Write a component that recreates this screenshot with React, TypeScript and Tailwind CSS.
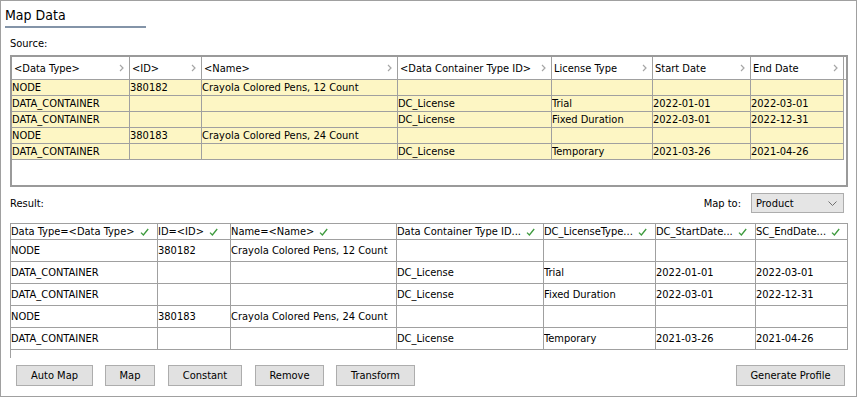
const srcCols = ['w-[118px]', 'w-[72px]', 'w-[196px]', 'w-[154px]', 'w-[101px]', 'w-[98px]', 'w-[93px]'];
const resCols = ['w-[147px]', 'w-[73px]', 'w-[166px]', 'w-[147px]', 'w-[112px]', 'w-[100px]', 'w-[92px]'];

const srcHeaders = ['<Data Type>', '<ID>', '<Name>', '<Data Container Type ID>', 'License Type', 'Start Date', 'End Date'];
const resHeaders = [
  'Data Type=<Data Type>',
  'ID=<ID>',
  'Name=<Name>',
  'Data Container Type ID...',
  'DC_LicenseType...',
  'DC_StartDate...',
  'SC_EndDate...',
];

const rows = [
  ['NODE', '380182', 'Crayola Colored Pens, 12 Count', '', '', '', ''],
  ['DATA_CONTAINER', '', '', 'DC_License', 'Trial', '2022-01-01', '2022-03-01'],
  ['DATA_CONTAINER', '', '', 'DC_License', 'Fixed Duration', '2022-03-01', '2022-12-31'],
  ['NODE', '380183', 'Crayola Colored Pens, 24 Count', '', '', '', ''],
  ['DATA_CONTAINER', '', '', 'DC_License', 'Temporary', '2021-03-26', '2021-04-26'],
];

function Chevron() {
  return (
    <svg width="5" height="8" viewBox="0 0 5 8" className="shrink-0">
      <path d="M1 1 L4 4 L1 7" fill="none" stroke="#a6a6a6" strokeWidth="1.2" />
    </svg>
  );
}

function Check() {
  return (
    <svg width="9" height="8" viewBox="0 0 9 8" className="shrink-0">
      <path d="M1 4.6 L3.4 7 L8.2 1" fill="none" stroke="#3d9a3d" strokeWidth="1.3" />
    </svg>
  );
}

function Button({ label, width }: { label: string; width: string }) {
  return (
    <button
      className={`${width} h-[21px] bg-[#e1e1e1] border border-[#adadad] flex items-center justify-center text-black`}
    >
      {label}
    </button>
  );
}

export default function App() {
  return (
    <div className="w-[857px] h-[397px] border border-[#a0a0a0] bg-white text-black text-[11px] leading-[13px] font-['DejaVu_Sans_Condensed','DejaVu_Sans',sans-serif] font-stretch-condensed flex flex-col">
      {/* title */}
      <div className="ml-[4px] w-[141px] h-[27px] border-b-2 border-[#8394a8] pt-[6px]">
        <span className="text-[14px] leading-[16px]">Map Data</span>
      </div>

      <div className="ml-[9px] mt-[9px]">Source:</div>

      {/* source list */}
      <div className="ml-[9px] mt-[5px] w-[838px] h-[132px] border-2 border-[#9a9a9a] bg-white">
        <div className="flex h-[23px] border-b border-[#a0a0a0]">
          {srcHeaders.map((h, i) => (
            <div
              key={i}
              className={`${srcCols[i]} flex items-center justify-between pl-[2px] pr-[5px] border-r border-[#a0a0a0]`}
            >
              <span className="whitespace-nowrap">{h}</span>
              <Chevron />
            </div>
          ))}
        </div>
        {rows.map((r, ri) => (
          <div key={ri} className="flex h-[16px]">
            {r.map((c, ci) => (
              <div
                key={ci}
                className={`${srcCols[ci]} bg-[#fdf6c4] border-r border-b border-[#a0a0a0] flex items-center whitespace-nowrap overflow-hidden`}
              >
                {c}
              </div>
            ))}
          </div>
        ))}
      </div>

      {/* result label + map to */}
      <div className="ml-[9px] mt-[6px] w-[834px] h-[20px] flex items-center justify-between">
        <span>Result:</span>
        <div className="flex items-center gap-[10px]">
          <span>Map to:</span>
          <div className="w-[93px] h-[20px] bg-[#e5e5e5] border border-[#adadad] flex items-center justify-between pl-[4px] pr-[6px]">
            <span>Product</span>
            <svg width="9" height="5" viewBox="0 0 9 5">
              <path d="M0.5 0.5 L4.5 4.5 L8.5 0.5" fill="none" stroke="#707070" strokeWidth="1" />
            </svg>
          </div>
        </div>
      </div>

      {/* result table */}
      <div className="ml-[9px] mt-[10px] w-[838px] h-[135px] border-l border-t border-[#a0a0a0]">
        <div className="flex h-[16px]">
          {resHeaders.map((h, i) => (
            <div
              key={i}
              className={`${resCols[i]} flex items-center gap-[5px] border-r border-b border-[#a0a0a0] whitespace-nowrap overflow-hidden`}
            >
              <span>{h}</span>
              <Check />
            </div>
          ))}
        </div>
        {rows.map((r, ri) => (
          <div key={ri} className="flex h-[22px]">
            {r.map((c, ci) => (
              <div
                key={ci}
                className={`${resCols[ci]} border-r border-b border-[#a0a0a0] flex items-center whitespace-nowrap overflow-hidden`}
              >
                {c}
              </div>
            ))}
          </div>
        ))}
      </div>

      {/* buttons */}
      <div className="ml-[15px] mt-[7px] w-[829px] flex items-center justify-between">
        <div className="flex items-center gap-[12px]">
          <Button label="Auto Map" width="w-[77px]" />
          <div className="flex items-center gap-[13px]">
            <Button label="Map" width="w-[50px]" />
            <Button label="Constant" width="w-[74px]" />
            <Button label="Remove" width="w-[69px]" />
          </div>
          <Button label="Transform" width="w-[79px]" />
        </div>
        <Button label="Generate Profile" width="w-[109px]" />
      </div>
    </div>
  );
}
